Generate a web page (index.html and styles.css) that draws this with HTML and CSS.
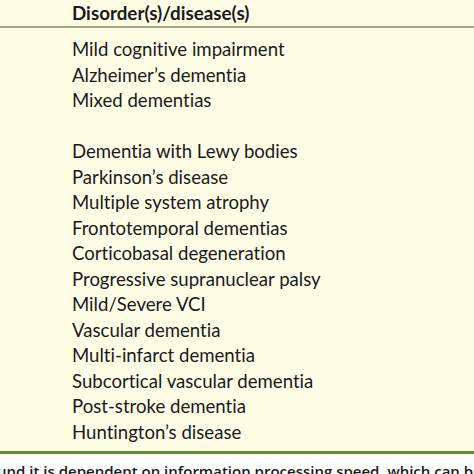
FILE: index.html
```html
<!DOCTYPE html>
<html>
<head>
<meta charset="utf-8">
<link rel="stylesheet" href="styles.css">
</head>
<body>
<div class="table">
  <div class="head">Disorder(s)/disease(s)</div>
  <ul class="rows">
    <li>Mild cognitive impairment</li>
    <li>Alzheimer’s dementia</li>
    <li>Mixed dementias</li>
    <li class="blank">&nbsp;</li>
    <li>Dementia with Lewy bodies</li>
    <li>Parkinson’s disease</li>
    <li>Multiple system atrophy</li>
    <li>Frontotemporal dementias</li>
    <li>Corticobasal degeneration</li>
    <li>Progressive supranuclear palsy</li>
    <li>Mild/Severe VCI</li>
    <li>Vascular dementia</li>
    <li>Multi-infarct dementia</li>
    <li>Subcortical vascular dementia</li>
    <li>Post-stroke dementia</li>
    <li>Huntington’s disease</li>
  </ul>
</div>
<p class="after">und it is dependent on information processing speed, which can be</p>
</body>
</html>
```
FILE: styles.css
```css
html, body {
  margin: 0;
  padding: 0;
  background: #ffffff;
  overflow: hidden;
}
.table {
  background: #fefde6;
  border-bottom: 3px solid #5e8a32;
  font-family: Lato, "Open Sans", sans-serif;
  font-variant-ligatures: none;
  color: #1a1a1a;
}
.head {
  height: 28px;
  box-sizing: border-box;
  padding: 1px 0 0 72px;
  font-weight: bold;
  font-size: 18.8px;
  line-height: 24px;
  border-bottom: 2px solid #a2a884;
}
.rows {
  list-style: none;
  margin: 0;
  padding: 9px 0 6px 72px;
  font-size: 18.6px;
  line-height: 25.5px;
}
.after {
  margin: 7px 0 0 -3px;
  white-space: nowrap;
  font-family: "Open Sans", sans-serif;
  font-weight: 600;
  font-size: 15px;
  line-height: 20px;
  color: #1a1a1a;
}
```
